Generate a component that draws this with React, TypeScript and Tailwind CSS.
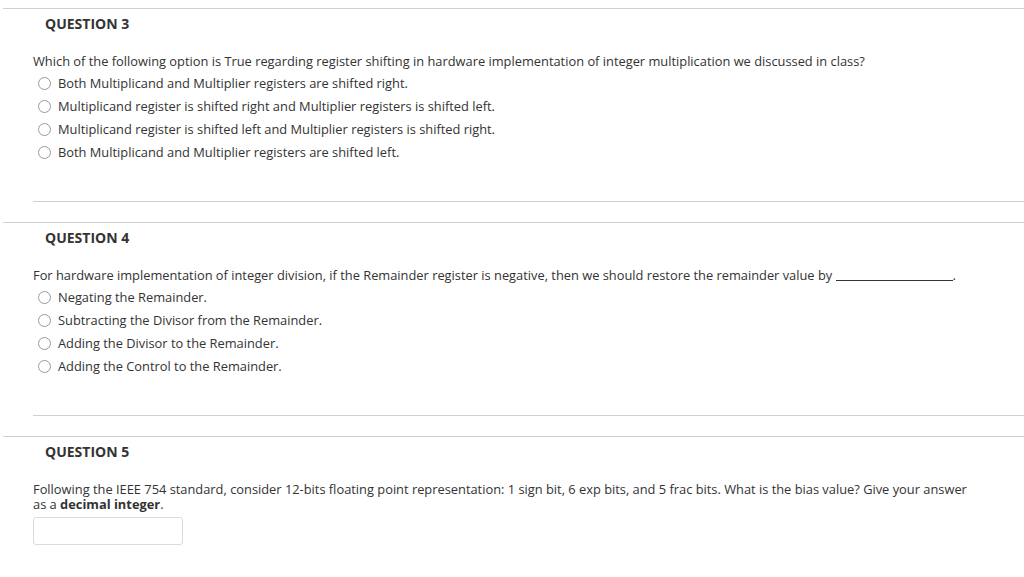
import React from "react";

type Question = {
  num: number;
  text: React.ReactNode;
  options?: string[];
  input?: boolean;
};

const questions: Question[] = [
  {
    num: 3,
    text: "Which of the following option is True regarding register shifting in hardware implementation of integer multiplication we discussed in class?",
    options: [
      "Both Multiplicand and Multiplier registers are shifted right.",
      "Multiplicand register is shifted right and Multiplier registers is shifted left.",
      "Multiplicand register is shifted left and Multiplier registers is shifted right.",
      "Both Multiplicand and Multiplier registers are shifted left.",
    ],
  },
  {
    num: 4,
    text: (
      <>
        For hardware implementation of integer division, if the Remainder register is negative, then we should restore the
        remainder value by{" "}
        <span className="inline-block w-[117px] border-b border-[#333] align-baseline translate-y-[1px]"></span>.
      </>
    ),
    options: [
      "Negating the Remainder.",
      "Subtracting the Divisor from the Remainder.",
      "Adding the Divisor to the Remainder.",
      "Adding the Control to the Remainder.",
    ],
  },
  {
    num: 5,
    text: (
      <>
        Following the IEEE 754 standard, consider 12-bits floating point representation: 1 sign bit, 6 exp bits, and 5 frac
        bits. What is the bias value? Give your answer as a <b className="font-bold">decimal integer</b>.
      </>
    ),
    input: true,
  },
];

function QuestionBlock({ q }: { q: Question }) {
  return (
    <div className="ml-[3px] border-t border-[#d0d0d0]">
      <h2 className="pl-[42px] pt-[7px] font-bold text-[14px] leading-[15px] text-[#333]">QUESTION {q.num}</h2>
      <div className="pl-[30px]">
        <p className="mt-[23px] max-w-[940px] text-[12.85px] leading-[15px] text-[#333]">{q.text}</p>
        {q.options && (
          <ul className="mt-[3px]">
            {q.options.map((opt) => (
              <li key={opt} className="flex h-[23px] items-center gap-[7px] pl-[5px]">
                <span className="h-[13px] w-[13px] rounded-full border border-[#999] bg-white"></span>
                <span className="text-[12.85px] leading-[15px] text-[#333]">{opt}</span>
              </li>
            ))}
          </ul>
        )}
        {q.options && <div className="mt-[37px] mb-[20px] border-t border-[#d0d0d0]"></div>}
        {q.input && (
          <input
            type="text"
            className="mt-[5px] h-[28px] w-[150px] rounded-[3px] border border-[#dcdcdc] bg-white outline-none"
          />
        )}
      </div>
    </div>
  );
}

export default function App() {
  return (
    <div className="min-h-[577px] bg-white pt-[8px] font-['Open_Sans',sans-serif]">
      {questions.map((q) => (
        <QuestionBlock key={q.num} q={q} />
      ))}
    </div>
  );
}
